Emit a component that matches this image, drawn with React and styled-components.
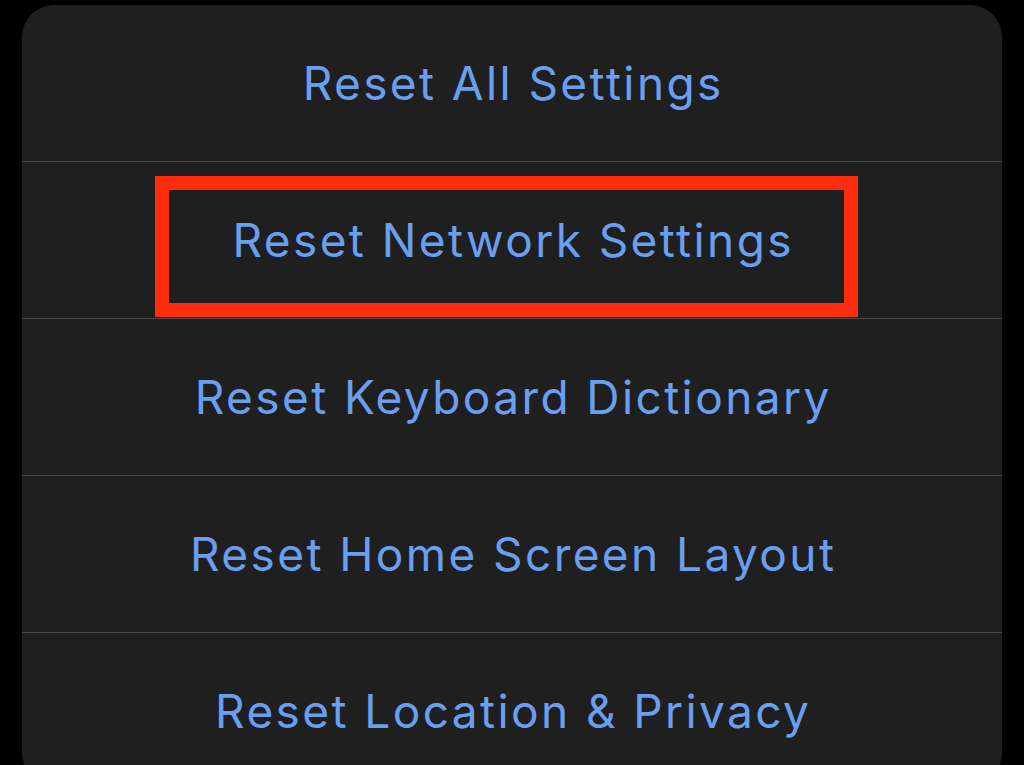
import React from 'react'
import styled, { createGlobalStyle } from 'styled-components'

const GlobalStyle = createGlobalStyle`
  html, body {
    margin: 0;
    padding: 0;
    background: #000;
    overflow: hidden;
  }
`

const Screen = styled.div`
  width: 1024px;
  height: 765px;
  background: #000;
  padding: 5px 22px 0;
  box-sizing: border-box;
  overflow: hidden;
`

const Panel = styled.div`
  background: #1f1f20;
  border-radius: 32px;
  height: 780px;
  overflow: hidden;
`

const Row = styled.div`
  position: relative;
  height: 156px;
  border-bottom: 1px solid #4d4d4f;
  display: flex;
  align-items: center;
  justify-content: center;
  font-family: Inter, 'Noto Sans', sans-serif;
  font-size: 46px;
  color: #6a9ff0;
  letter-spacing: 2.4px;

  &:last-child {
    border-bottom: none;
  }
`

const Label = styled.span`
  margin-right: -2.4px;
`

const Highlight = styled.div`
  position: absolute;
  top: 14px;
  left: 133px;
  width: 703px;
  height: 141px;
  box-sizing: border-box;
  border: 14px solid #fe2d0b;
  pointer-events: none;
`

const items = [
  'Reset All Settings',
  'Reset Network Settings',
  'Reset Keyboard Dictionary',
  'Reset Home Screen Layout',
  'Reset Location & Privacy',
]

export default function App() {
  return (
    <Screen>
      <GlobalStyle />
      <Panel>
        {items.map((text, i) => (
          <Row key={text}>
            <Label>{text}</Label>
            {i === 1 && <Highlight />}
          </Row>
        ))}
      </Panel>
    </Screen>
  )
}
